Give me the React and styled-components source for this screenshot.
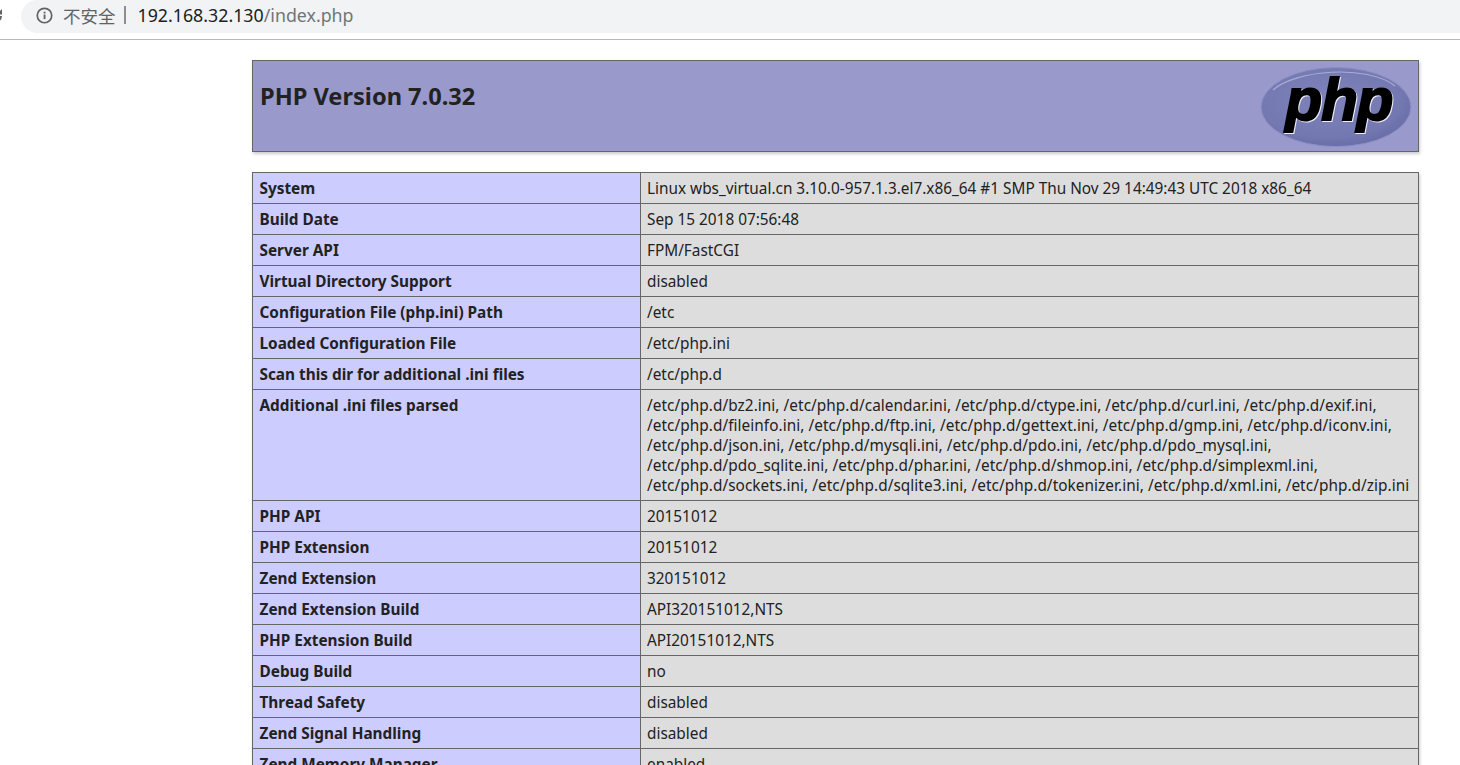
import React from "react";
import styled, { createGlobalStyle } from "styled-components";

const rows = [
  ["System", "Linux wbs_virtual.cn 3.10.0-957.1.3.el7.x86_64 #1 SMP Thu Nov 29 14:49:43 UTC 2018 x86_64"],
  ["Build Date", "Sep 15 2018 07:56:48"],
  ["Server API", "FPM/FastCGI"],
  ["Virtual Directory Support", "disabled"],
  ["Configuration File (php.ini) Path", "/etc"],
  ["Loaded Configuration File", "/etc/php.ini"],
  ["Scan this dir for additional .ini files", "/etc/php.d"],
  [
    "Additional .ini files parsed",
    "/etc/php.d/bz2.ini, /etc/php.d/calendar.ini, /etc/php.d/ctype.ini, /etc/php.d/curl.ini, /etc/php.d/exif.ini, /etc/php.d/fileinfo.ini, /etc/php.d/ftp.ini, /etc/php.d/gettext.ini, /etc/php.d/gmp.ini, /etc/php.d/iconv.ini, /etc/php.d/json.ini, /etc/php.d/mysqli.ini, /etc/php.d/pdo.ini, /etc/php.d/pdo_mysql.ini, /etc/php.d/pdo_sqlite.ini, /etc/php.d/phar.ini, /etc/php.d/shmop.ini, /etc/php.d/simplexml.ini, /etc/php.d/sockets.ini, /etc/php.d/sqlite3.ini, /etc/php.d/tokenizer.ini, /etc/php.d/xml.ini, /etc/php.d/zip.ini",
    true,
  ],
  ["PHP API", "20151012"],
  ["PHP Extension", "20151012"],
  ["Zend Extension", "320151012"],
  ["Zend Extension Build", "API320151012,NTS"],
  ["PHP Extension Build", "API20151012,NTS"],
  ["Debug Build", "no"],
  ["Thread Safety", "disabled"],
  ["Zend Signal Handling", "disabled"],
  ["Zend Memory Manager", "enabled"],
];

const PhpLogo = () => (
  <svg width="154" height="82" viewBox="0 0 154 82">
    <defs>
      <radialGradient id="oval" cx="45%" cy="40%" r="70%">
        <stop offset="0%" stopColor="#7f83bb" />
        <stop offset="70%" stopColor="#7478b1" />
        <stop offset="100%" stopColor="#6064a2" />
      </radialGradient>
    </defs>
    <ellipse cx="77" cy="41" rx="75" ry="39.5" fill="url(#oval)" stroke="#8d90c2" strokeWidth="1" />
    <path d="M14 24 C36 4 108 -2 136 20" fill="none" stroke="#a9abd6" strokeWidth="1.2" />
    <S.LogoText x="80" y="54">
      php
    </S.LogoText>
  </svg>
);

const App = () => {
  return (
    <S.Page>
      <GlobalStyle />
      <S.BrowserBar>
        <S.Reload>
          <svg width="16" height="16" viewBox="0 0 16 16" fill="none">
            <path d="M13 4.5 A6 6 0 1 0 14 8" stroke="#5f6368" strokeWidth="2" />
            <path d="M9.5 6.5 H15 V1 Z" fill="#5f6368" />
          </svg>
        </S.Reload>
        <S.Omnibox>
          <S.InfoIcon>
            <svg width="17" height="17" viewBox="0 0 16 16" fill="none">
              <circle cx="8" cy="8" r="6.8" stroke="#5f6368" strokeWidth="1.6" />
              <rect x="7.2" y="7" width="1.7" height="4.4" fill="#5f6368" />
              <rect x="7.2" y="4.4" width="1.7" height="1.7" fill="#5f6368" />
            </svg>
          </S.InfoIcon>
          <S.Insecure>不安全</S.Insecure>
          <S.Divider />
          <S.Host>192.168.32.130</S.Host>
          <S.Path>/index.php</S.Path>
        </S.Omnibox>
      </S.BrowserBar>
      <S.Content>
        <S.Header>
          <S.Title>PHP Version 7.0.32</S.Title>
          <PhpLogo />
        </S.Header>
        <S.Table>
          <colgroup>
            <col width="388" />
            <col />
          </colgroup>
          <tbody>
            {rows.map(([label, value, isList]) => (
              <tr key={label}>
                <S.Label>{label}</S.Label>
                <S.Value $isList={isList}>{value}</S.Value>
              </tr>
            ))}
          </tbody>
        </S.Table>
      </S.Content>
    </S.Page>
  );
};

const GlobalStyle = createGlobalStyle`
  html, body {
    margin: 0;
    height: 765px;
    overflow: hidden;
    background: #fff;
  }
`;

const S = {
  Page: styled.div`
    height: 765px;
    overflow: hidden;
    font-family: "Noto Sans", "Noto Sans CJK SC", sans-serif;
    color: #222;
  `,
  BrowserBar: styled.div`
    height: 39px;
    border-bottom: 1px solid #b8b8b8;
    display: flex;
    align-items: flex-start;
    position: relative;
  `,
  Reload: styled.div`
    position: absolute;
    left: -13px;
    top: 8px;
    display: flex;
  `,
  Omnibox: styled.div`
    margin-left: 21px;
    flex: 1;
    height: 33px;
    background: #f1f3f4;
    border-radius: 17px 0 0 17px;
    display: flex;
    align-items: center;
    padding: 0 0 3px 15px;
    box-sizing: border-box;
  `,
  InfoIcon: styled.span`
    display: flex;
    margin-right: 10px;
  `,
  Insecure: styled.span`
    font-size: 17.5px;
    color: #5f6368;
  `,
  Divider: styled.span`
    width: 2px;
    height: 18px;
    background: #8a8d91;
    margin: 0 12px 0 8px;
  `,
  Host: styled.span`
    font-size: 17.8px;
    color: #202124;
  `,
  Path: styled.span`
    font-size: 17.8px;
    color: #70757a;
  `,
  Content: styled.div`
    width: 1167px;
    margin: 20px 0 0 252px;
  `,
  Header: styled.div`
    box-sizing: border-box;
    height: 92px;
    background: #9999cc;
    border: 1px solid #666;
    box-shadow: 1px 2px 3px #ccc;
    display: flex;
    justify-content: space-between;
    align-items: flex-start;
    padding: 5px 5px 0 7px;
    margin-bottom: 20px;
  `,
  Title: styled.h1`
    margin: 14px 0 0;
    font-size: 23.6px;
    line-height: 33px;
    font-weight: 700;
    color: #222;
  `,
  LogoText: styled.text`
    text-anchor: middle;
    font-family: "Liberation Sans", sans-serif;
    font-size: 60px;
    font-style: italic;
    font-weight: 700;
    letter-spacing: -1px;
    fill: #000;
    stroke: #000;
    stroke-width: 2px;
    filter: drop-shadow(1px 1px 0 #eeeef8);
  `,
  Table: styled.table`
    width: 1167px;
    table-layout: fixed;
    border-collapse: collapse;
    box-shadow: 1px 2px 3px #ccc;
    font-size: 15.35px;
    line-height: 20px;
  `,
  Label: styled.td`
    background: #ccccff;
    border: 1px solid #666;
    padding: 5px 6px 5px 6.5px;
    font-weight: 700;
    vertical-align: top;
  `,
  Value: styled.td`
    background: #dddddd;
    border: 1px solid #666;
    padding: 5px 6px;
    vertical-align: top;
    letter-spacing: ${({ $isList }) => ($isList ? "0.055px" : "normal")};
  `,
};

export default App;
